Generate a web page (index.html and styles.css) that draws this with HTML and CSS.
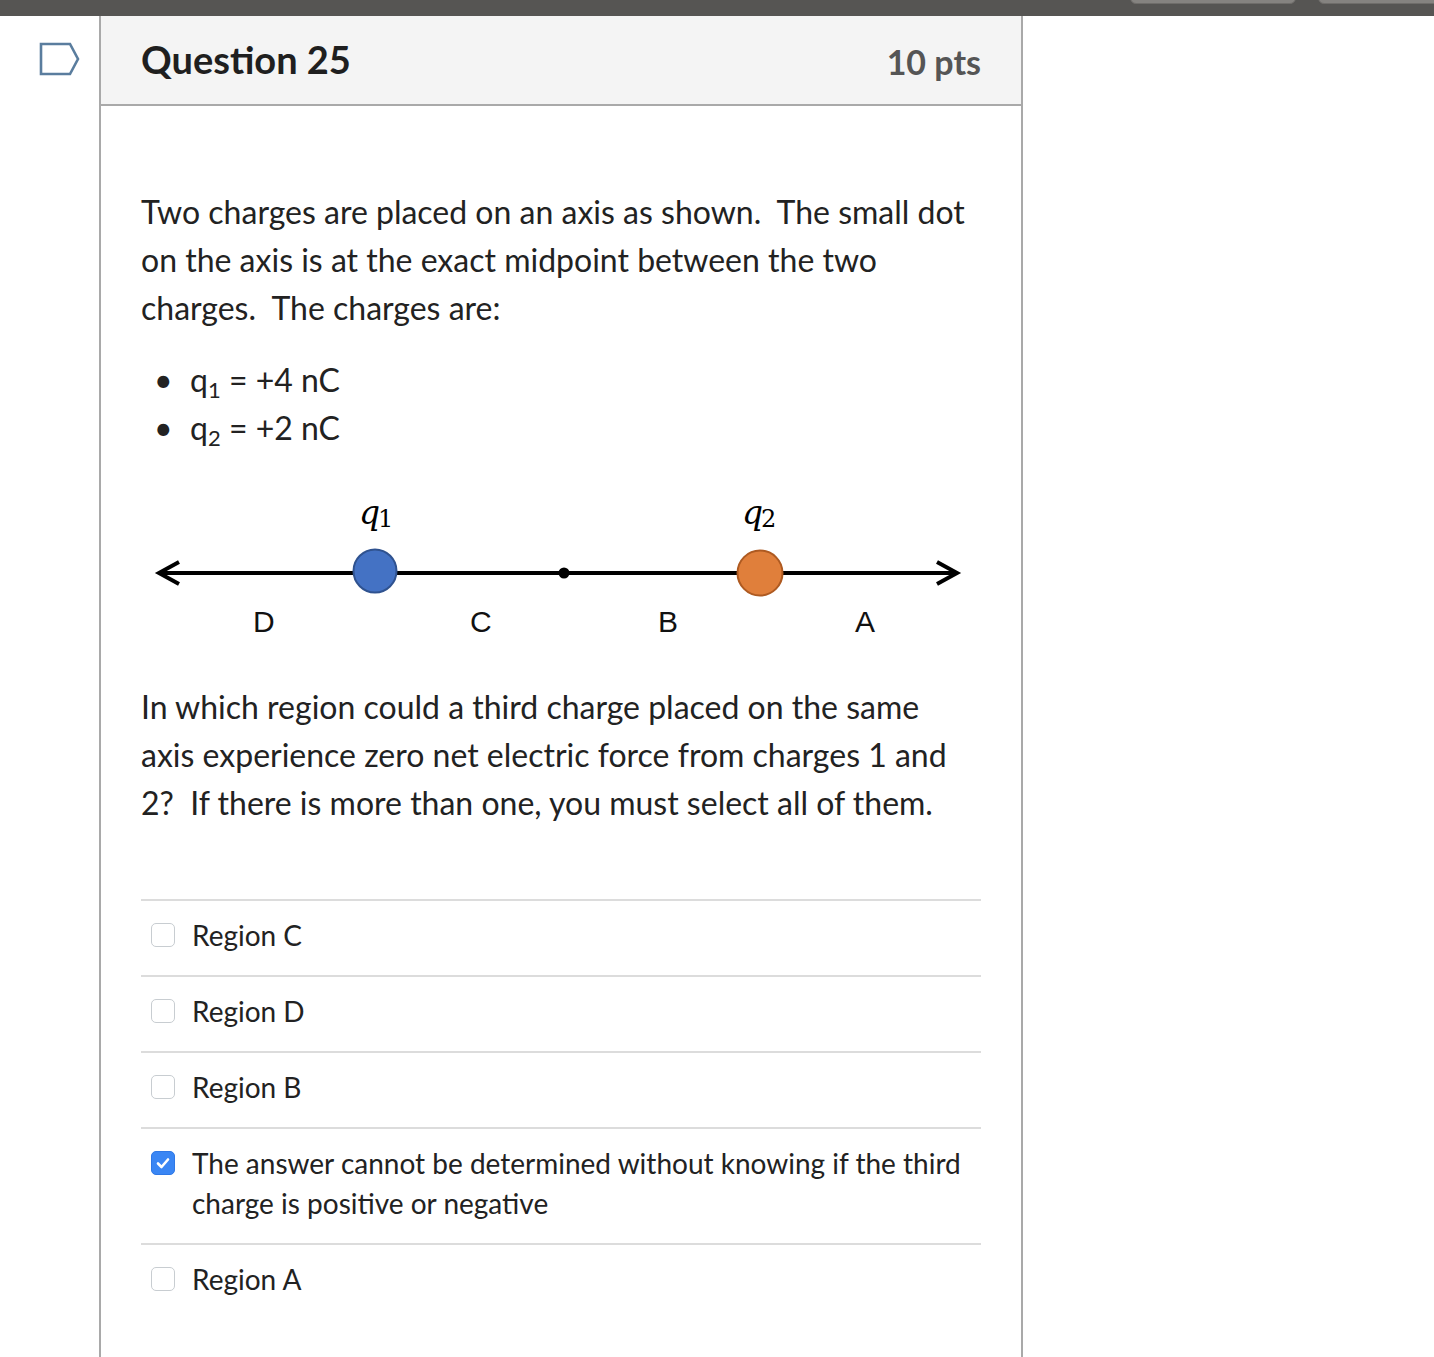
FILE: index.html
```html
<!DOCTYPE html>
<html lang="en">
<head>
  <meta charset="utf-8">
  <title>Question 25</title>
  <link rel="stylesheet" href="styles.css">
</head>
<body>
  <div class="topbar">
    <span class="topbtn topbtn-wide"></span>
    <span class="topbtn topbtn-cut"></span>
  </div>

  <div class="page">
    <div class="flagcol">
      <svg class="flag" width="44" height="36" viewBox="0 0 44 36">
        <polygon points="2,2 31,2 39,17 31,32 2,32" fill="none" stroke="#5a7d9e" stroke-width="2.6"/>
      </svg>
    </div>

    <div class="question">
      <div class="qheader">
        <span class="qtitle">Question 25</span>
        <span class="qpts">10 pts</span>
      </div>

      <div class="qbody">
        <p>Two charges are placed on an axis as shown.&nbsp; The small dot on the axis is at the exact midpoint between the two charges.&nbsp; The charges are:</p>
        <ul class="charges">
          <li>q<sub>1</sub> = +4 nC</li>
          <li>q<sub>2</sub> = +2 nC</li>
        </ul>

        <svg class="axis" width="840" height="190" viewBox="0 0 840 190">
          <line x1="18" y1="93" x2="816" y2="93" stroke="#000" stroke-width="4"/>
          <polyline points="38,82 18,93 38,104" fill="none" stroke="#000" stroke-width="4"/>
          <polyline points="796,82 816,93 796,104" fill="none" stroke="#000" stroke-width="4"/>
          <circle cx="234" cy="91" r="21.5" fill="#4472c4" stroke="#2f528f" stroke-width="2"/>
          <circle cx="423" cy="93" r="5.5" fill="#000"/>
          <circle cx="619" cy="93" r="22.5" fill="#e07f3b" stroke="#ae5a21" stroke-width="2"/>
          <text class="qlabel" x="218" y="44">q</text>
          <text class="qsub" x="237" y="47">1</text>
          <text class="qlabel" x="601" y="44">q</text>
          <text class="qsub" x="620" y="47">2</text>
          <text class="region" x="112" y="152">D</text>
          <text class="region" x="329" y="152">C</text>
          <text class="region" x="517" y="152">B</text>
          <text class="region" x="714" y="152">A</text>
        </svg>

        <p>In which region could a third charge placed on the same axis experience zero net electric force from charges 1 and 2?&nbsp; If there is more than one, you must select all of them.</p>

        <div class="answers">
          <label class="answer"><span class="box"></span><span class="atext">Region C</span></label>
          <label class="answer"><span class="box"></span><span class="atext">Region D</span></label>
          <label class="answer"><span class="box"></span><span class="atext">Region B</span></label>
          <label class="answer">
            <span class="box checked">
              <svg width="16" height="16" viewBox="0 0 16 16"><polyline points="3,8.5 6.5,12 13,4.5" fill="none" stroke="#fff" stroke-width="2.6" stroke-linecap="round" stroke-linejoin="round"/></svg>
            </span>
            <span class="atext">The answer cannot be determined without knowing if the third charge is positive or negative</span>
          </label>
          <label class="answer"><span class="box"></span><span class="atext">Region A</span></label>
        </div>
      </div>
    </div>
  </div>
</body>
</html>
```

FILE: styles.css
```css
html, body {
  margin: 0;
  height: 100%;
}

body {
  background-color: #fff;
  font-family: Lato, "Open Sans", sans-serif;
  color: #2d3b45;
  overflow: hidden;
}

.topbar {
  height: 16px;
  background-color: #565553;
  display: flex;
  justify-content: flex-end;
  overflow: hidden;
}

.topbtn {
  height: 30px;
  margin-top: -28px;
  border: 1px solid #6f6d6a;
  border-radius: 6px;
  background-color: #858380;
}
.topbtn-wide {
  width: 164px;
  margin-right: 22px;
}
.topbtn-cut {
  width: 120px;
  margin-right: -6px;
}

.page {
  display: flex;
  align-items: flex-start;
}

.flagcol {
  width: 99px;
  padding-top: 26px;
  padding-left: 39px;
  box-sizing: border-box;
}

.flag {
  display: block;
}

.question {
  width: 920px;
  border-left: 2px solid #a9a9a9;
  border-right: 2px solid #a9a9a9;
  min-height: 1400px;
}

.qheader {
  height: 88px;
  background-color: #f4f4f4;
  border-bottom: 2px solid #a9a9a9;
  display: flex;
  align-items: baseline;
  justify-content: space-between;
  padding: 0 40px 0 40px;
  line-height: 86px;
}

.qtitle {
  font-size: 38px;
  font-weight: bold;
  color: #1f1f1f;
}

.qpts {
  font-size: 34px;
  font-weight: bold;
  color: #555;
  position: relative;
  top: 1px;
}

.qbody {
  padding: 82px 46px 0 40px;
  font-size: 32px;
  line-height: 48px;
  color: #222;
}

.qbody p {
  margin: 0;
}

.charges {
  margin: 24px 0 0 0;
  padding-left: 13px;
  list-style: none;
}

.charges li::before {
  content: "\2022";
  display: inline-block;
  width: 36px;
}

.charges sub {
  font-size: 22px;
  line-height: 0;
  vertical-align: -6px;
}

.axis {
  display: block;
  margin: 28px 0 13px 0;
}

.axis .qlabel {
  font-family: "DejaVu Serif", serif;
  font-style: italic;
  font-size: 33px;
  fill: #000;
}
.axis .qsub {
  font-family: "DejaVu Serif", serif;
  font-size: 24px;
  fill: #000;
}
.axis .region {
  font-family: "Liberation Sans", sans-serif;
  font-size: 30px;
  fill: #111;
}

.answers {
  margin-top: 72px;
  width: 840px;
}

.answer {
  display: flex;
  align-items: flex-start;
  border-top: 2px solid #dcdcdc;
  padding: 14px 0 20px 10px;
  font-size: 28px;
  line-height: 40px;
  color: #222;
}

.box {
  flex: none;
  width: 22px;
  height: 22px;
  margin-top: 8px;
  margin-right: 17px;
  border: 1px solid #c8cdd1;
  border-radius: 5px;
  background-color: #fff;
  display: flex;
  align-items: center;
  justify-content: center;
}

.box.checked {
  background-color: #3a86f4;
  border-color: #2f78e6;
}

.atext {
  flex: 1;
  padding-right: 10px;
}
```
